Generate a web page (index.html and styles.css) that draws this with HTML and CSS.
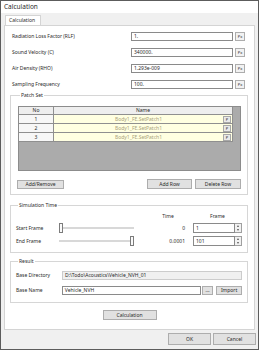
FILE: index.html
```html
<!DOCTYPE html>
<html>
<head>
<meta charset="utf-8">
<link rel="stylesheet" href="styles.css">
</head>
<body>
<div class="window">
  <div class="title">Calculation</div>
  <div class="body">
    <div class="tabs"><div class="tab">Calculation</div></div>
    <div class="panel">
      <div class="param"><span class="plabel">Radiation Loss Factor (RLF)</span><span class="field">1.</span><button class="px">Px</button></div>
      <div class="param"><span class="plabel">Sound Velocity (C)</span><span class="field">340000.</span><button class="px">Px</button></div>
      <div class="param"><span class="plabel">Air Density (RHO)</span><span class="field">1.293e-009</span><button class="px">Px</button></div>
      <div class="param"><span class="plabel">Sampling Frequency</span><span class="field">100.</span><button class="px">Px</button></div>

      <fieldset class="group patch">
        <legend>Patch Set</legend>
        <div class="grid">
          <div class="grow ghead"><div class="c-no">No</div><div class="c-name">Name</div></div>
          <div class="grow"><div class="c-no">1</div><div class="c-name"><span class="pname">Body1_FE.SetPatch1</span><span class="pbtn">P</span></div></div>
          <div class="grow"><div class="c-no">2</div><div class="c-name"><span class="pname">Body1_FE.SetPatch1</span><span class="pbtn">P</span></div></div>
          <div class="grow"><div class="c-no">3</div><div class="c-name"><span class="pname">Body1_FE.SetPatch1</span><span class="pbtn">P</span></div></div>
        </div>
        <div class="actions">
          <button class="btn addremove">Add/Remove</button>
          <span class="fill"></span>
          <button class="btn addrow">Add Row</button>
          <button class="btn delrow">Delete Row</button>
        </div>
      </fieldset>

      <fieldset class="group sim">
        <legend>Simulation Time</legend>
        <div class="simgrid">
          <span></span><span></span><span></span>
          <span class="hdr time">Time</span>
          <span class="hdr">Frame</span>

          <span class="slabel">Start Frame</span>
          <div class="slider start"><span class="handle"></span></div>
          <span></span>
          <span class="tval">0</span>
          <div class="spin"><span class="sval">1</span><span class="sbtns"><i class="up"></i><i class="down"></i></span></div>

          <span class="slabel">End Frame</span>
          <div class="slider end"><span class="handle"></span></div>
          <span></span>
          <span class="tval">0.0001</span>
          <div class="spin"><span class="sval">101</span><span class="sbtns"><i class="up"></i><i class="down"></i></span></div>
        </div>
      </fieldset>

      <fieldset class="group result">
        <legend>Result</legend>
        <div class="rrow"><span class="rlabel">Base Directory</span><span class="field dir">D:\Todo\Acoustics\Vehicle_NVH_01</span></div>
        <div class="rrow second"><span class="rlabel">Base Name</span><span class="field bname">Vehicle_NVH</span><button class="btn dots">...</button><button class="btn import">Import</button></div>
      </fieldset>

      <div class="calcrow"><button class="btn calc">Calculation</button></div>
    </div>
  </div>
  <div class="footer">
    <button class="btn fbtn">OK</button>
    <button class="btn fbtn">Cancel</button>
  </div>
</div>
</body>
</html>
```

FILE: styles.css
```css
* { box-sizing: border-box; }
html, body { margin: 0; padding: 0; }
body {
  width: 259px;
  height: 350px;
  font-family: "Noto Sans", "DejaVu Sans", sans-serif;
  font-size: 5px;
  color: #2a2a2a;
  background: #fff;
  overflow: hidden;
}
button {
  font: inherit;
  color: inherit;
  margin: 0;
  padding: 0;
}
.window {
  width: 259px;
  height: 350px;
  border: 1px solid #5c5c5c;
  background: #f0f0f0;
  display: flex;
  flex-direction: column;
}
.title {
  height: 12px;
  background: #fff;
  font-size: 6.5px;
  line-height: 12px;
  padding-left: 3px;
}
.body {
  height: 317px;
  padding: 2px 3px 0 3px;
  display: flex;
  flex-direction: column;
}
.tabs {
  height: 10px;
  display: flex;
  padding-left: 1px;
}
.tab {
  width: 36px;
  height: 10px;
  border: 1px solid #d4d4d4;
  border-bottom: none;
  background: #fff;
  line-height: 9px;
  padding-left: 3px;
}
.panel {
  height: 305px;
  background: #fff;
  border: 1px solid #d4d4d4;
  padding-top: 2px;
}
.param {
  display: flex;
  align-items: center;
  height: 16px;
  padding: 0 9px 0 7px;
}
.plabel { width: 119px; }
.field {
  display: block;
  height: 9px;
  border: 1px solid #8a8a8a;
  background: #fff;
  line-height: 7px;
  padding-left: 2px;
  white-space: nowrap;
  overflow: hidden;
}
.param .field { width: 102px; }
.px {
  width: 10px;
  height: 9px;
  margin-left: 2px;
  border: 1px solid #adadad;
  background: #f2f2f2;
  font-size: 4px;
  line-height: 7px;
}

.group {
  margin: 0 6px 0 5px;
  border: 1px solid #d6d6d6;
  min-width: 0;
}
.group legend {
  padding: 0 1px;
  margin-left: 2px;
  line-height: 7px;
  height: 7px;
  font-size: 5px;
}

.patch { padding: 7px 6px 5px 7px; margin-top: 0; }
.grid {
  height: 65px;
  border: 1px solid #8c8c8c;
  background: #ababab;
}
.grow { display: flex; height: 9px; }
.ghead { height: 8px; }
.c-no {
  width: 35px;
  border-right: 1px solid #8f8f8f;
  border-bottom: 1px solid #8f8f8f;
  background: #f7f7f7;
  text-align: center;
  line-height: 8px;
}
.ghead .c-no, .ghead .c-name { background: #eeeeee; line-height: 7px; }
.c-name {
  width: 179px;
  border-right: 1px solid #8f8f8f;
  border-bottom: 1px solid #8f8f8f;
  background: #ffffe1;
  display: flex;
  align-items: center;
  justify-content: center;
  line-height: 8px;
}
.pname {
  flex: 1;
  text-align: center;
  color: #aaa37c;
}
.pbtn {
  width: 8px;
  height: 7px;
  margin-right: 1px;
  border: 1px solid #a8a8a8;
  background: #e9e9e9;
  font-size: 4px;
  line-height: 5px;
  text-align: center;
}
.actions {
  display: flex;
  align-items: center;
  margin-top: 8px;
  height: 10px;
}
.fill { flex: 1; }
.btn {
  border: 1px solid #adadad;
  background: #e1e1e1;
  text-align: center;
  line-height: 7px;
  white-space: nowrap;
}
.addremove { width: 47px; height: 9px; margin-left: -1px; }
.addrow { width: 45px; height: 10px; margin-right: 3px; }
.delrow { width: 46px; height: 10px; }

.sim { margin-top: 7px; padding: 3px 5px 6px 5px; }
.simgrid {
  display: grid;
  grid-template-columns: 43px 75px 1fr 42px 49px;
  grid-template-rows: 8px 10px 10px;
  row-gap: 3px;
  align-items: center;
}
.simgrid .hdr { text-align: center; line-height: 8px; }
.simgrid .hdr.time { padding-right: 8px; }
.tval { text-align: right; padding-right: 8px; }
.slabel { line-height: 10px; }
.slider {
  height: 10px;
  display: flex;
  background: linear-gradient(#fff 4px, #d8d8d8 4px, #d8d8d8 6px, #fff 6px);
}
.slider.end { justify-content: flex-end; }
.handle {
  width: 4px;
  height: 10px;
  border: 1px solid #7c7c7c;
  background: #fafafa;
}
.spin {
  display: flex;
  height: 10px;
}
.sval {
  flex: 1;
  border: 1px solid #8a8a8a;
  line-height: 8px;
  padding-left: 2px;
  background: #fff;
}
.sbtns {
  width: 7px;
  border: 1px solid #a0a0a0;
  border-left: none;
  display: flex;
  flex-direction: column;
  justify-content: space-around;
  align-items: center;
  background: #f2f2f2;
}
.sbtns i { width: 0; height: 0; border-left: 1.5px solid transparent; border-right: 1.5px solid transparent; }
.sbtns .up { border-bottom: 2px solid #555; }
.sbtns .down { border-top: 2px solid #555; }

.result { margin-top: 5px; padding: 5px 5px 7px 5px; }
.rrow {
  display: flex;
  align-items: center;
  height: 10px;
}
.rrow.second { margin-top: 5px; }
.rlabel { width: 46px; }
.field.dir {
  width: 180px;
  height: 9px;
  background: #f0f0f0;
  border-color: #cccccc;
}
.field.bname { width: 140px; height: 9px; }
.dots { width: 11px; height: 9px; margin-left: 1px; }
.import { width: 26px; height: 9px; margin-left: 3px; }

.calcrow {
  display: flex;
  justify-content: center;
  margin-top: 7px;
}
.calc { width: 54px; height: 10px; }

.footer {
  height: 19px;
  display: flex;
  justify-content: flex-end;
  align-items: center;
  padding: 0 2px 1px 0;
  gap: 2px;
}
.fbtn { width: 43px; height: 12px; line-height: 10px; background: #e1e1e1; }
```
